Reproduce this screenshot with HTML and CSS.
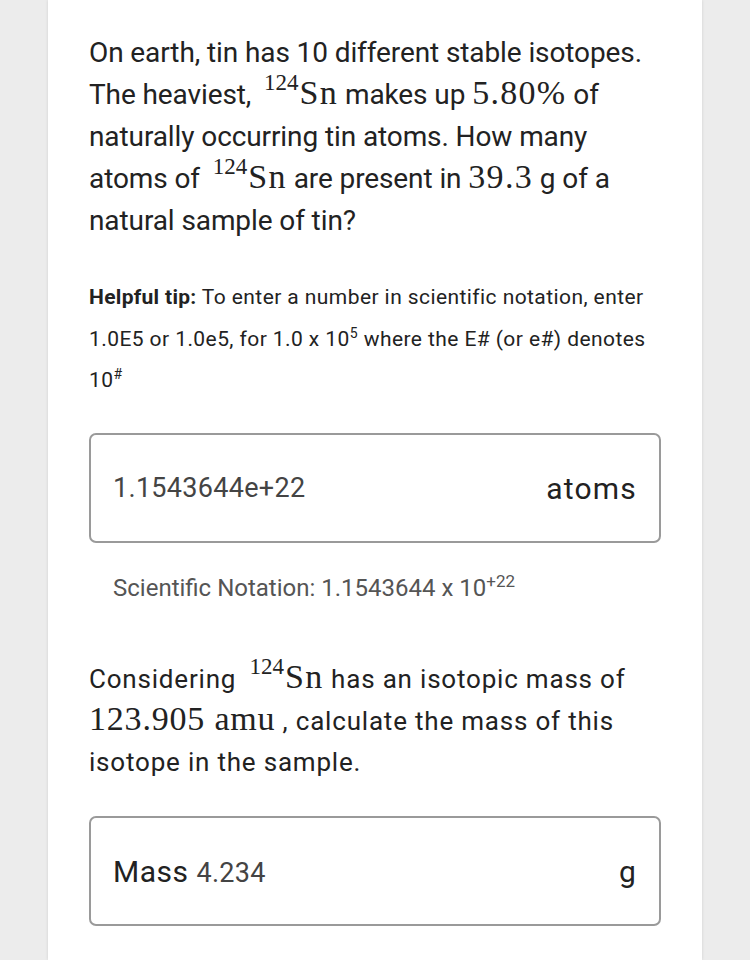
FILE: index.html
```html
<!DOCTYPE html>
<html>
<head>
<meta charset="utf-8">
<link rel="stylesheet" href="styles.css">
</head>
<body>
<div class="page">
  <div class="card">
    <p class="question">On earth, tin has 10 different stable isotopes. The heaviest, <span class="math"><sup class="iso">124</sup>Sn</span> makes up <span class="math">5.80%</span> of naturally occurring tin atoms. How many atoms of <span class="math"><sup class="iso">124</sup>Sn</span> are present in <span class="math">39.3</span> g of a natural sample of tin?</p>

    <p class="tip"><b>Helpful tip:</b> To enter a number in scientific notation, enter 1.0E5 or 1.0e5, for 1.0 x 10<sup>5</sup> where the E# (or e#) denotes 10<sup>#</sup></p>

    <div class="answer first">
      <span class="value">1.1543644e+22</span>
      <span class="unit">atoms</span>
    </div>

    <p class="sci">Scientific Notation: 1.1543644 x 10<sup>+22</sup></p>

    <p class="question2">Considering <span class="math"><sup class="iso">124</sup>Sn</span> has an isotopic mass of <span class="math amu">123.905 amu</span> , calculate the mass of this isotope in the sample.</p>

    <div class="answer second">
      <span class="label">Mass <span class="value">4.234</span></span>
      <span class="unit">g</span>
    </div>
  </div>
</div>
</body>
</html>
```

FILE: styles.css
```css
html, body {
  margin: 0;
  padding: 0;
  background: #ececec;
}
.page {
  padding: 0 48px;
}
.card {
  background: #ffffff;
  min-height: 960px;
  padding: 32px 41px 0 41px;
  box-sizing: border-box;
  box-shadow: 0 0 3px rgba(0,0,0,0.12);
  font-family: Roboto, "Liberation Sans", sans-serif;
  color: #222;
}
p { margin: 0; }
.question {
  font-size: 28px;
  line-height: 42px;
  letter-spacing: -0.1px;
  color: #222;
}
.math {
  font-family: "Liberation Serif", "DejaVu Serif", serif;
  font-size: 34px;
  line-height: 1;
  letter-spacing: 1.3px;
}
.iso {
  font-size: 23px;
  letter-spacing: 0;
  vertical-align: 0;
  position: relative;
  top: -14px;
  margin-left: 6px;
  margin-right: 1px;
  line-height: 0;
}
.tip {
  margin-top: 35px;
  font-size: 21px;
  line-height: 41.5px;
  letter-spacing: 0.42px;
  color: #222;
}
.tip b {
  letter-spacing: 0.3px;
}
.tip sup {
  font-size: 14px;
  line-height: 0;
}
.answer {
  height: 110px;
  border: 2px solid #9a9a9a;
  border-radius: 7px;
  box-sizing: border-box;
  display: flex;
  align-items: center;
  justify-content: space-between;
  padding: 0 22px;
}
.answer.first {
  margin-top: 31.5px;
}
.answer.second {
  margin-top: 32.5px;
}
.answer .value {
  font-size: 27px;
  letter-spacing: 0.3px;
  color: #444;
}
.answer .unit {
  font-size: 30px;
  letter-spacing: 1.2px;
  color: #222;
}
.answer .label {
  font-size: 30px;
  letter-spacing: 0.5px;
  color: #222;
}
.sci {
  margin-top: 31px;
  padding-left: 24px;
  font-size: 24px;
  color: #555;
}
.sci sup {
  font-size: 17px;
  line-height: 0;
}
.question2 {
  margin-top: 57px;
  font-size: 26px;
  line-height: 41.5px;
  letter-spacing: 0.8px;
  color: #222;
}
.question2 .math {
  font-size: 34px;
  letter-spacing: 1.5px;
}
.question2 .math.amu {
  letter-spacing: 0.8px;
}
```
